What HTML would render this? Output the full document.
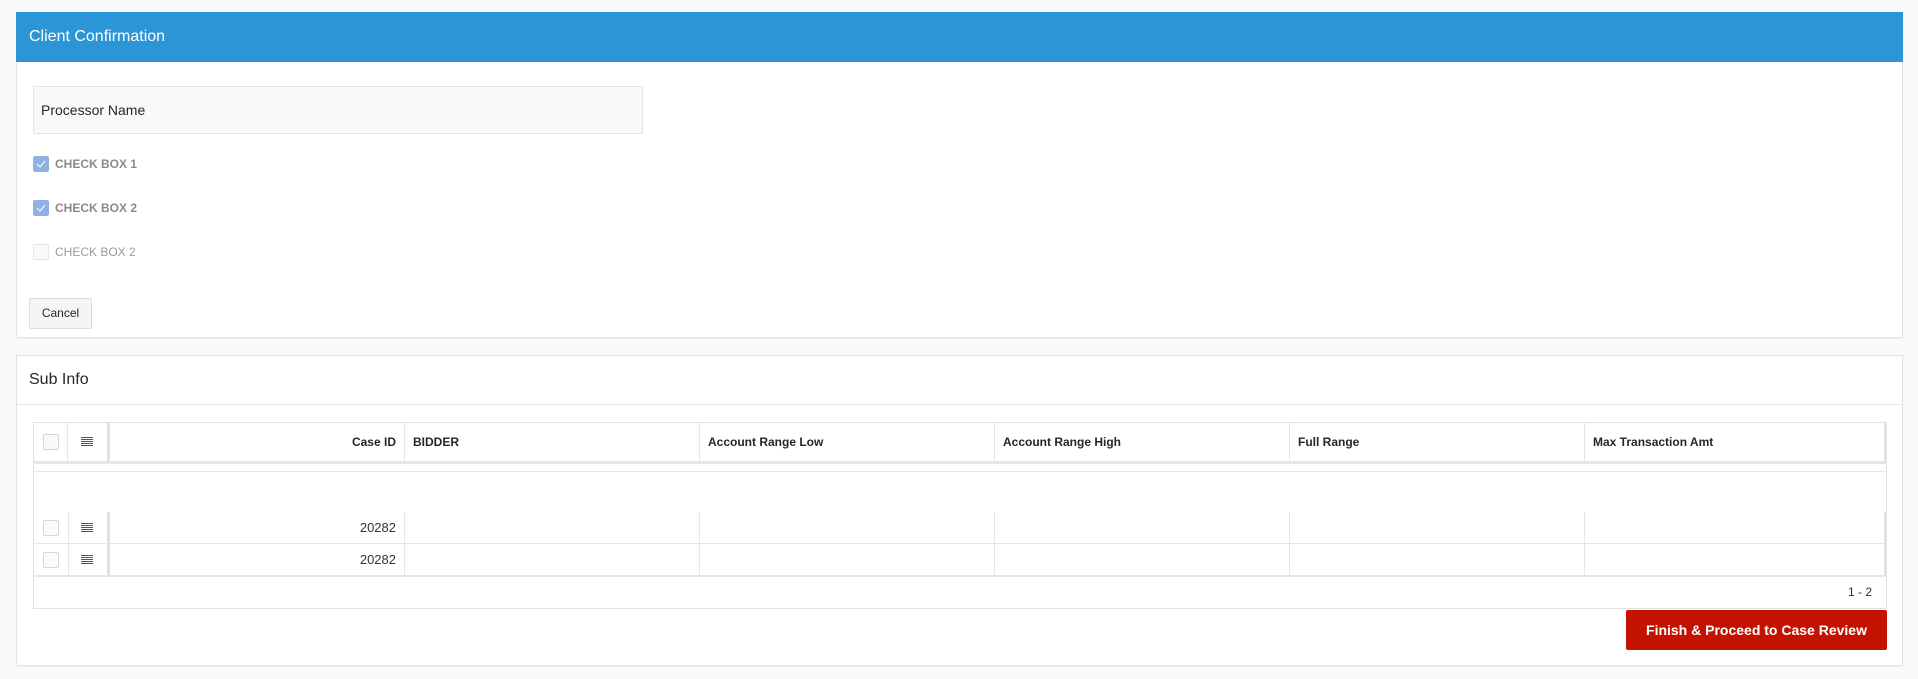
<!DOCTYPE html>
<html><head><style>
*{box-sizing:border-box}
body{margin:0;width:1918px;height:679px;background:#fafafa;font-family:"Liberation Sans",Arial,sans-serif;color:#262626;position:relative;overflow:hidden}
.abs{position:absolute}
.panel{position:absolute;left:16px;width:1887px;background:#fff;border:1px solid #e2e2e2;box-shadow:0 1px 2px rgba(0,0,0,.05)}
.cb{position:absolute;width:16px;height:16px;border:1px solid #d6d6d6;border-radius:2px;background:#fafafa}
.cb.on{background:#8fb2e3;border-color:#8fb2e3}
.lbl{position:absolute;font-size:12px;font-weight:bold;color:#8a8a8a}
th,td{padding:0}
.hd{position:absolute;top:422px;height:40px;font-size:12px;font-weight:bold;line-height:40px;border-right:1px solid #e6e6e6;padding:0 8px}
.vl{position:absolute;width:1px;background:#e6e6e6}
.hl{position:absolute;height:1px;background:#e6e6e6}
.menu{position:absolute;width:12px;height:10px;background:repeating-linear-gradient(#555 0 1px,transparent 1px 2px)}
.num{position:absolute;font-size:13px;color:#333;width:80px;text-align:right}
</style></head><body>
<div class="panel" style="top:12px;height:326px;">
  <div class="abs" style="left:-1px;top:-1px;width:1887px;height:50px;background:#2b95d6"></div>
  <div class="abs" style="left:12px;top:15px;color:#fff;font-size:16px;">Client Confirmation</div>
</div>
<div class="abs" style="left:33px;top:86px;width:610px;height:48px;background:#f9f9f9;border:1px solid #e4e4e4;border-radius:2px"></div>
<div class="abs" style="left:41px;top:102px;font-size:14px;">Processor Name</div>
<div class="cb on" style="left:33px;top:156px"><svg width="14" height="14" viewBox="0 0 14 14"><path d="M3 7l3 3 5-6" stroke="#fff" stroke-width="1" fill="none"/></svg></div>
<div class="lbl" style="left:55px;top:157px">CHECK BOX 1</div>
<div class="cb on" style="left:33px;top:200px"><svg width="14" height="14" viewBox="0 0 14 14"><path d="M3 7l3 3 5-6" stroke="#fff" stroke-width="1" fill="none"/></svg></div>
<div class="lbl" style="left:55px;top:201px">CHECK BOX 2</div>
<div class="cb" style="left:33px;top:244px;border-color:#e6e6e6"></div>
<div class="lbl" style="left:55px;top:245px;font-weight:normal;color:#9a9a9a">CHECK BOX 2</div>
<div class="abs" style="left:29px;top:298px;width:63px;height:31px;background:#f5f5f5;border:1px solid #dcdcdc;border-radius:2px;font-size:12px;line-height:29px;text-align:center">Cancel</div>

<div class="panel" style="top:355px;height:311px;"></div>
<div class="hl" style="left:17px;top:404px;width:1885px"></div>
<div class="abs" style="left:29px;top:371px;font-size:16px;">Sub Info</div>

<div class="abs" style="left:33px;top:422px;width:1854px;height:187px;border:1px solid #e2e2e2;background:#fff"></div>
<div class="hl" style="left:33px;top:461px;width:1854px;height:3px"></div>
<div class="hl" style="left:33px;top:471px;width:1854px"></div>
<div class="hl" style="left:33px;top:543px;width:1854px"></div>
<div class="hl" style="left:33px;top:575px;width:1854px;height:2px"></div>
<div class="abs" style="left:1884px;top:422px;width:3px;height:41px;background:#e2e2e2"></div>
<div class="abs" style="left:1884px;top:512px;width:3px;height:64px;background:#e2e2e2"></div>
<div class="abs" style="left:107px;top:422px;width:3px;height:41px;background:#e2e2e2"></div>
<div class="abs" style="left:107px;top:512px;width:3px;height:64px;background:#e2e2e2"></div>
<!-- vertical lines -->
<div class="vl" style="left:67px;top:422px;height:40px"></div>
<div class="vl" style="left:68px;top:512px;height:64px"></div>
<div class="vl" style="left:404px;top:422px;height:40px"></div><div class="vl" style="left:404px;top:512px;height:64px"></div>
<div class="vl" style="left:699px;top:422px;height:40px"></div><div class="vl" style="left:699px;top:512px;height:64px"></div>
<div class="vl" style="left:994px;top:422px;height:40px"></div><div class="vl" style="left:994px;top:512px;height:64px"></div>
<div class="vl" style="left:1289px;top:422px;height:40px"></div><div class="vl" style="left:1289px;top:512px;height:64px"></div>
<div class="vl" style="left:1584px;top:422px;height:40px"></div><div class="vl" style="left:1584px;top:512px;height:64px"></div>

<div class="cb" style="left:43px;top:434px"></div>
<div class="menu" style="left:81px;top:437px"></div>
<div class="abs" style="left:110px;top:422px;width:294px;padding-right:8px;text-align:right;font-size:12px;font-weight:bold;line-height:40px">Case ID</div>
<div class="abs" style="left:413px;top:422px;font-size:12px;font-weight:bold;line-height:40px">BIDDER</div>
<div class="abs" style="left:708px;top:422px;font-size:12px;font-weight:bold;line-height:40px">Account Range Low</div>
<div class="abs" style="left:1003px;top:422px;font-size:12px;font-weight:bold;line-height:40px">Account Range High</div>
<div class="abs" style="left:1298px;top:422px;font-size:12px;font-weight:bold;line-height:40px">Full Range</div>
<div class="abs" style="left:1593px;top:422px;font-size:12px;font-weight:bold;line-height:40px">Max Transaction Amt</div>

<div class="cb" style="left:43px;top:520px"></div>
<div class="menu" style="left:81px;top:523px"></div>
<div class="num" style="left:316px;top:520px">20282</div>
<div class="cb" style="left:43px;top:552px"></div>
<div class="menu" style="left:81px;top:555px"></div>
<div class="num" style="left:316px;top:552px">20282</div>

<div class="abs" style="left:1848px;top:585px;font-size:12px;color:#333">1 - 2</div>
<div class="abs" style="left:1626px;top:610px;width:261px;height:40px;background:#c41200;border-radius:2px;color:#fff;font-size:14px;font-weight:bold;line-height:40px;text-align:center">Finish &amp; Proceed to Case Review</div>
</body></html>
